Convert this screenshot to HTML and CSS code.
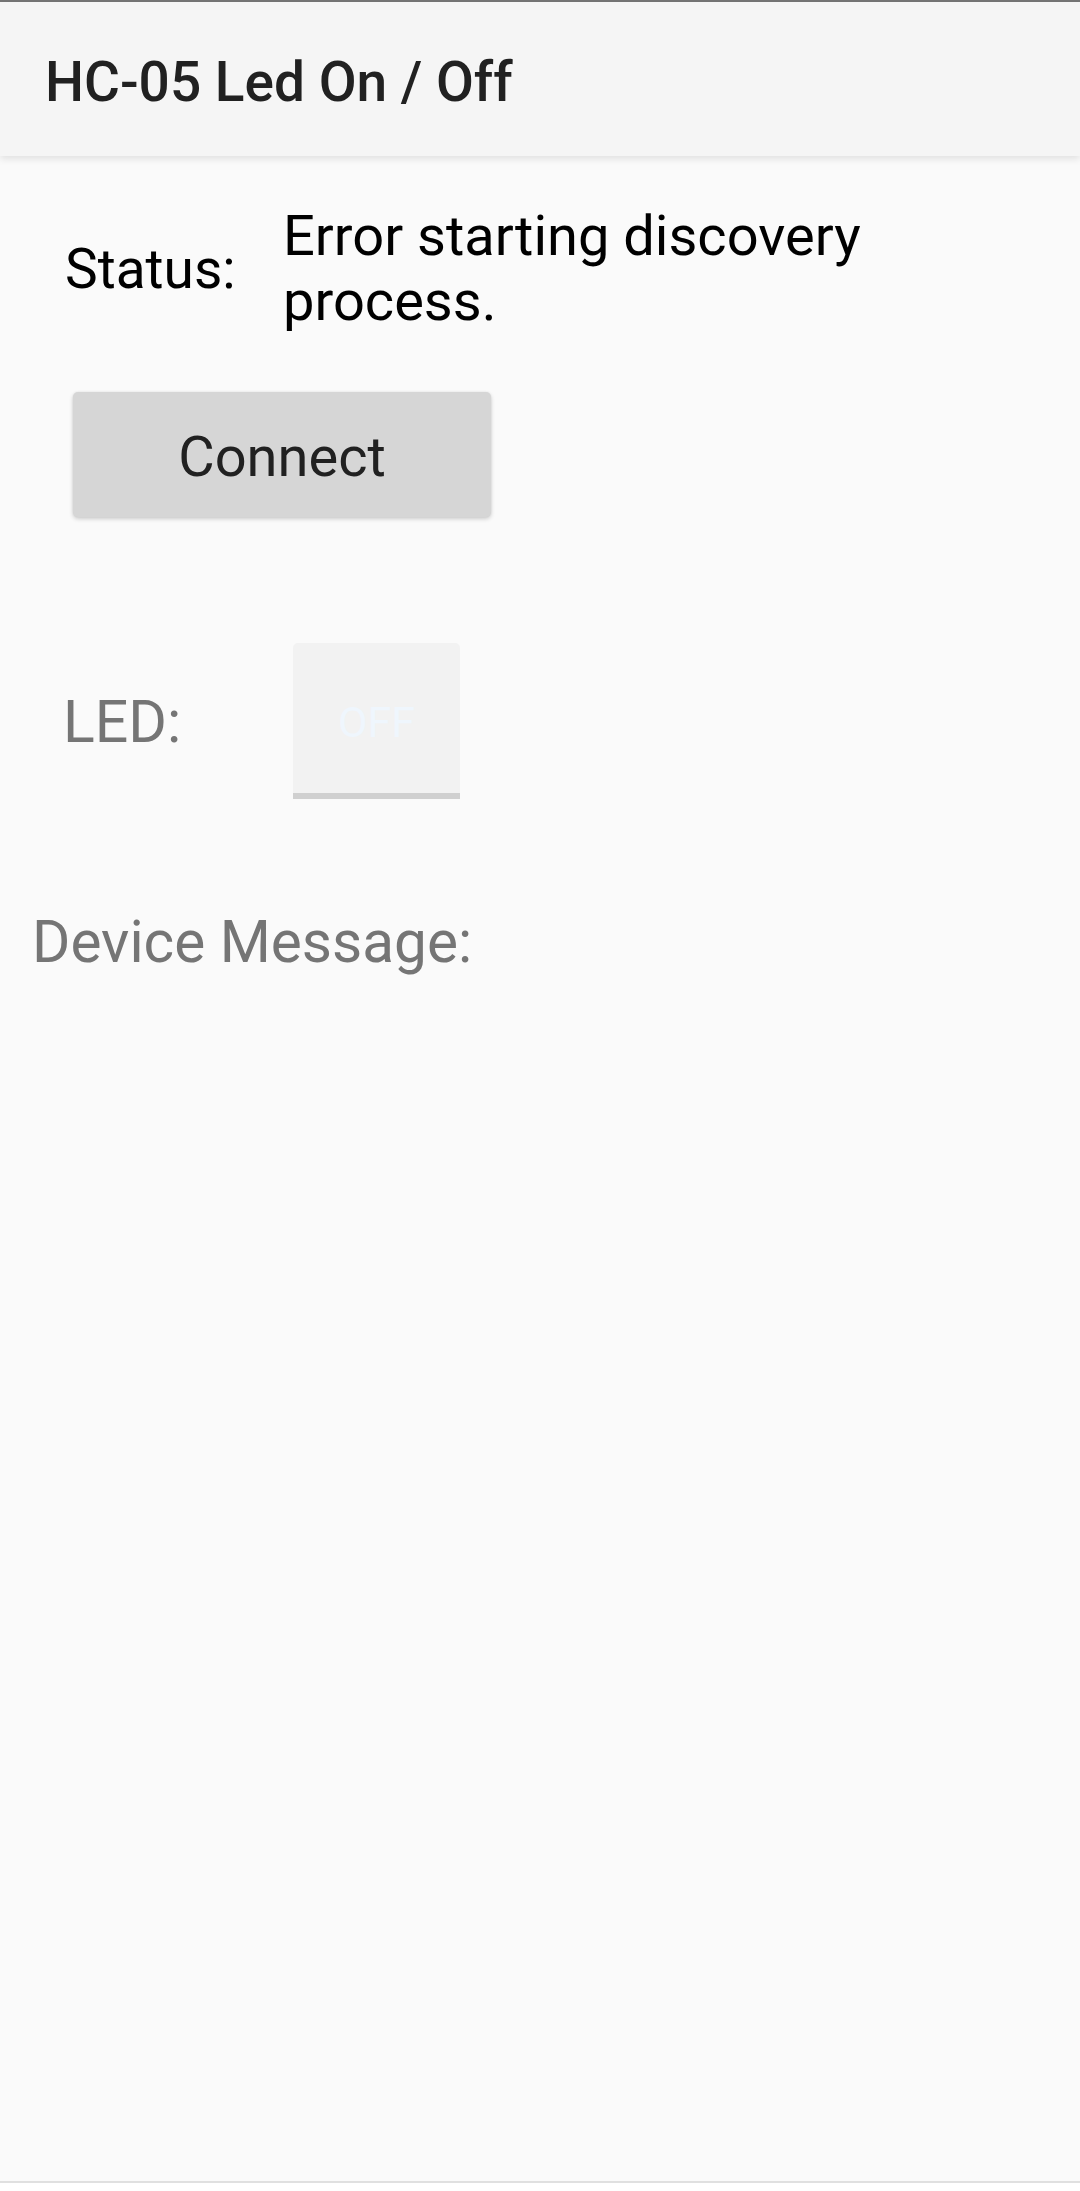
FILE: index.html
```html
<!DOCTYPE html>
<html>
<head>
<meta charset="utf-8">
<link rel="stylesheet" href="styles.css">
</head>
<body>
<div class="screen">
  <div class="statusline"></div>
  <header class="toolbar">
    <h1 class="title">HC-05 Led On / Off</h1>
  </header>
  <main class="content">
    <div class="status-row">
      <span class="status-label">Status:</span>
      <span class="status-value">Error starting discovery<br>process.</span>
    </div>
    <button class="connect-btn">Connect</button>
    <div class="led-row">
      <span class="led-label">LED:</span>
      <div class="toggle"><span class="toggle-text">OFF</span></div>
    </div>
    <div class="device-msg">Device Message:</div>
  </main>
  <div class="bottom-edge"></div>
</div>
</body>
</html>
```
FILE: styles.css
```css
html, body {
  margin: 0;
  padding: 0;
  background: #ffffff;
}
body {
  font-family: Roboto, "Noto Sans", sans-serif;
}
.screen {
  width: 1080px;
  height: 2191px;
  display: flex;
  flex-direction: column;
  background: #fafafa;
}
.statusline {
  height: 2px;
  background: #757575;
  flex: none;
}
.toolbar {
  flex: none;
  height: 154px;
  box-sizing: border-box;
  padding: 48px 0 0 45px;
  background: #f5f5f5;
  box-shadow: 0 3px 7px rgba(0, 0, 0, 0.10);
  position: relative;
  z-index: 1;
}
.title {
  margin: 0;
  font-size: 55px;
  line-height: 65px;
  font-weight: 500;
  color: #212121;
}
.content {
  flex: 1;
  display: flex;
  flex-direction: column;
  align-items: flex-start;
  padding-top: 48px;
}
.status-row {
  display: flex;
  align-items: center;
  margin-left: 65px;
  line-height: 65px;
  color: #000000;
}
.status-label {
  width: 218px;
  flex: none;
  font-size: 55px;
}
.status-value {
  display: block;
  font-size: 56px;
}
.connect-btn {
  margin: 58px 0 0 73px;
  width: 418px;
  height: 125px;
  padding: 6px 0 0 0;
  border: none;
  border-radius: 5px;
  background: #d6d6d6;
  box-shadow: 0 2px 4px rgba(0, 0, 0, 0.18), 0 0 2px rgba(0, 0, 0, 0.08);
  font-family: Roboto, "Noto Sans", sans-serif;
  font-size: 56px;
  line-height: 65px;
  color: #212121;
}
.led-row {
  margin: 126px 0 0 63px;
  display: flex;
  align-items: center;
}
.led-label {
  width: 230px;
  font-size: 59px;
  line-height: 71px;
  color: #757575;
  flex: none;
}
.toggle {
  width: 167px;
  height: 156px;
  box-sizing: border-box;
  background: #f2f2f2;
  border-bottom: 6px solid #d0d0d0;
  border-radius: 5px 5px 0 0;
  display: flex;
  justify-content: center;
  padding-top: 54px;
}
.toggle-text {
  font-size: 43px;
  line-height: 50px;
  color: #eff6fd;
}
.device-msg {
  margin: 108px 0 0 32px;
  font-size: 58.5px;
  line-height: 71px;
  color: #757575;
}
.bottom-edge {
  flex: none;
  height: 8px;
  border-top: 2px solid #e0e0e0;
  background: #ffffff;
}
```
